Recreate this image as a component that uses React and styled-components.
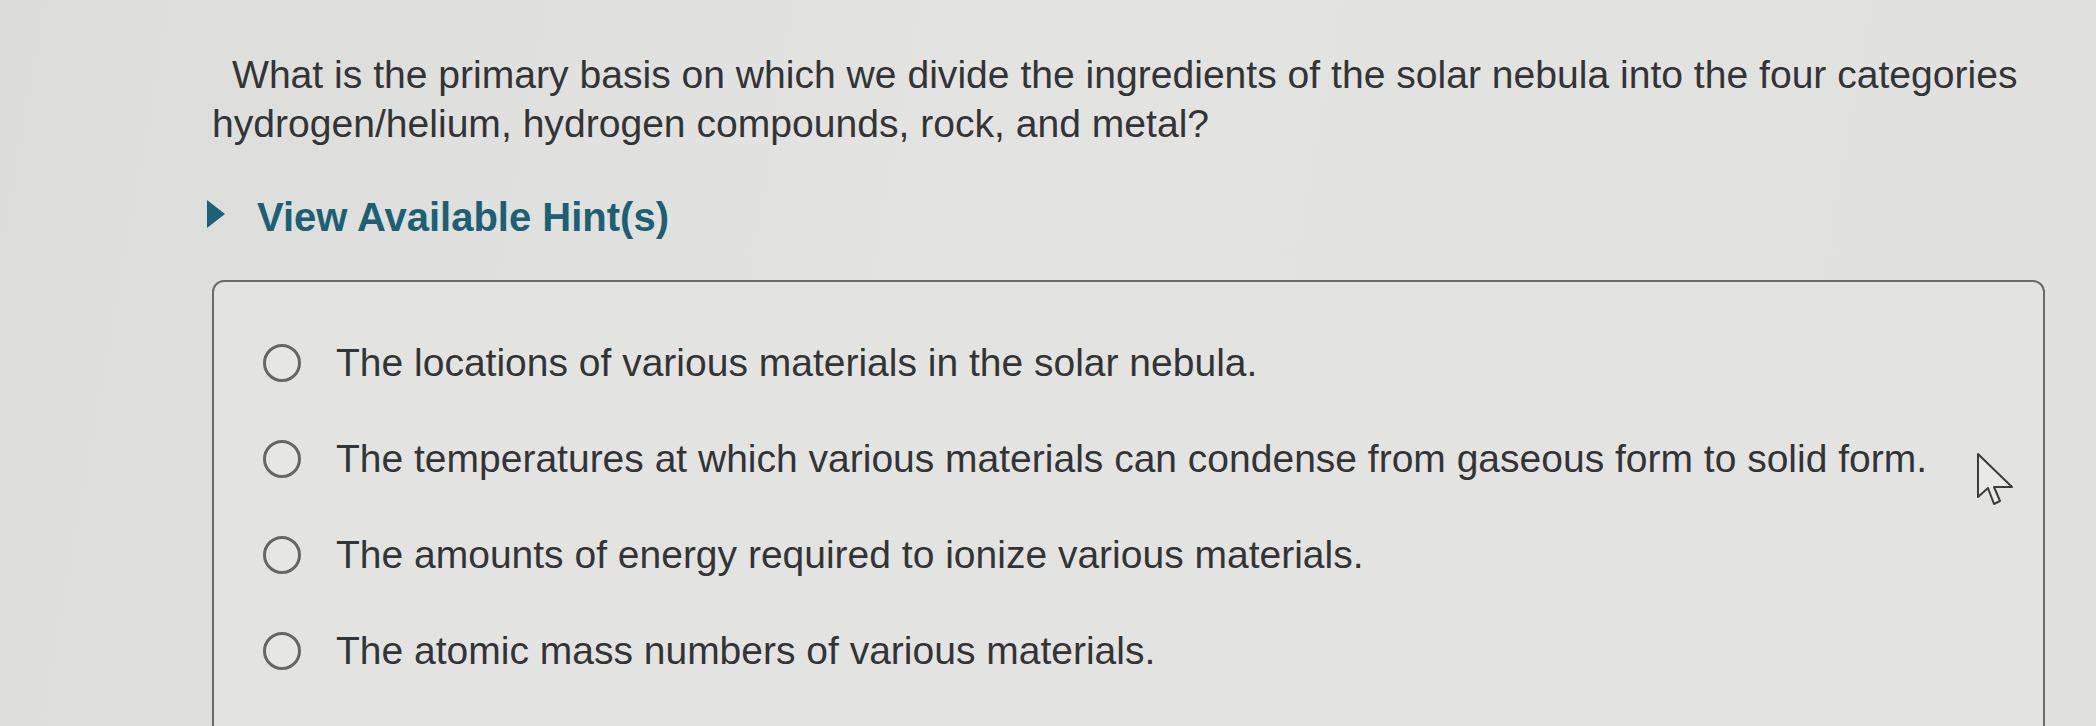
import React from 'react'
import styled, { createGlobalStyle } from 'styled-components'

const GlobalStyle = createGlobalStyle`
  html, body {
    margin: 0;
    padding: 0;
    background: #dfe0de;
  }
  body {
    font-family: 'Liberation Sans', Arial, sans-serif;
    color: #343536;
  }
`

const Page = styled.div`
  width: 2096px;
  height: 726px;
  overflow: hidden;
  box-sizing: border-box;
  padding: 50px 0 0 212px;
  background: linear-gradient(100deg, #dcdddb 0%, #e3e4e2 45%, #e1e2e0 100%);
`

const Question = styled.p`
  margin: 0;
  width: 1850px;
  font-size: 39.1px;
  line-height: 49px;
  text-indent: 20px;
  color: #333435;
`

const HintToggle = styled.button`
  display: flex;
  align-items: center;
  gap: 32px;
  margin: 49px 0 0 -5px;
  padding: 0;
  border: 0;
  background: none;
  font-family: inherit;
  font-size: 40px;
  font-weight: bold;
  line-height: 40px;
  color: #1d5f73;
  cursor: pointer;
`

const Caret = styled.span`
  display: block;
  width: 0;
  height: 0;
  margin-bottom: 6px;
  border-top: 14px solid transparent;
  border-bottom: 14px solid transparent;
  border-left: 18px solid #1d6078;
`

const AnswerBox = styled.div`
  position: relative;
  box-sizing: border-box;
  width: 1833px;
  height: 520px;
  margin-top: 43px;
  padding: 33px 0 0 49px;
  border: 2px solid #6b6c6c;
  border-radius: 12px;
  background: #e3e4e2;
`

const Option = styled.label`
  display: flex;
  align-items: center;
  gap: 35px;
  height: 96px;
  font-size: 39px;
  color: #333435;
  cursor: pointer;
`

const Radio = styled.span`
  display: block;
  flex: none;
  box-sizing: border-box;
  width: 38px;
  height: 38px;
  border: 3px solid #656667;
  border-radius: 50%;
  background: #e6e7e5;
`

const Pointer = styled.svg`
  position: absolute;
  left: 1762px;
  top: 170px;
`

const options = [
  'The locations of various materials in the solar nebula.',
  'The temperatures at which various materials can condense from gaseous form to solid form.',
  'The amounts of energy required to ionize various materials.',
  'The atomic mass numbers of various materials.',
]

export default function App() {
  return (
    <>
      <GlobalStyle />
      <Page>
        <Question>
          What is the primary basis on which we divide the ingredients of the solar nebula into the
          four categories hydrogen/helium, hydrogen compounds, rock, and metal?
        </Question>
        <HintToggle type="button">
          <Caret />
          View Available Hint(s)
        </HintToggle>
        <AnswerBox>
          {options.map(text => (
            <Option key={text}>
              <Radio />
              {text}
            </Option>
          ))}
          <Pointer width="40" height="56" viewBox="0 0 40 56">
            <path
              d="M2 2 L2 45 L12 36 L18 52 L24 49 L18 35 L36 35 Z"
              fill="#e9eae8"
              stroke="#3a3b3c"
              strokeWidth="2"
              strokeLinejoin="round"
            />
          </Pointer>
        </AnswerBox>
      </Page>
    </>
  )
}
